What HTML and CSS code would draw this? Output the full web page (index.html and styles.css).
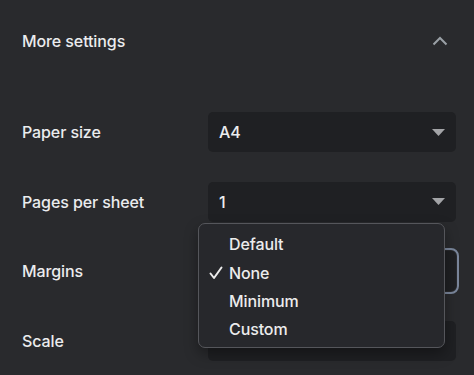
FILE: index.html
```html
<!DOCTYPE html>
<html>
<head>
<meta charset="utf-8">
<link rel="stylesheet" href="styles.css">
</head>
<body>
<div class="panel">
  <div class="header">
    <span class="title">More settings</span>
    <svg class="chevron" width="16" height="10" viewBox="0 0 16 10"><polyline points="1.5,8.5 8,2 14.5,8.5" fill="none" stroke="#9aa0a6" stroke-width="2"/></svg>
  </div>
  <div class="settings">
    <div class="label">Paper size</div>
    <div class="select"><span>A4</span><svg class="arrow" width="13" height="7" viewBox="0 0 13 7"><polygon points="0,0 13,0 6.5,7" fill="#a3a4a7"/></svg></div>
    <div class="label">Pages per sheet</div>
    <div class="select"><span>1</span><svg class="arrow" width="13" height="7" viewBox="0 0 13 7"><polygon points="0,0 13,0 6.5,7" fill="#a3a4a7"/></svg></div>
    <div class="label">Margins</div>
    <div class="select focused"></div>
    <div class="label">Scale</div>
    <div class="select"></div>
  </div>
  <div class="menu">
    <div class="item"><span class="check"></span>Default</div>
    <div class="item"><span class="check"><svg width="14" height="14" viewBox="0 0 14 14"><polyline points="1.5,7.5 5,12 12.5,1.5" fill="none" stroke="#ececec" stroke-width="2" stroke-linecap="round" stroke-linejoin="round"/></svg></span>None</div>
    <div class="item"><span class="check"></span>Minimum</div>
    <div class="item"><span class="check"></span>Custom</div>
  </div>
</div>
</body>
</html>
```

FILE: styles.css
```css
html, body {
  margin: 0;
  padding: 0;
  background: #292a2d;
  width: 474px;
  height: 375px;
  overflow: hidden;
}
.panel {
  position: relative;
  padding: 0 18px 0 22px;
  font-family: Inter, Roboto, "Liberation Sans", sans-serif;
  font-weight: 500;
  color: #ebecee;
  font-size: 16px;
  letter-spacing: -0.1px;
}
.header {
  height: 82px;
  display: flex;
  align-items: center;
  justify-content: space-between;
}
.chevron {
  margin-right: 8px;
}
.settings {
  margin-top: 30px;
  display: grid;
  grid-template-columns: 186px 1fr;
  grid-auto-rows: 40px;
  row-gap: 29.5px;
  align-items: center;
}
.label {
  font-size: 16px;
}
.select {
  height: 40px;
  background: #1f2023;
  border-radius: 5px;
  display: flex;
  align-items: center;
  justify-content: space-between;
  padding: 0 11px;
  box-sizing: border-box;
}
.select.focused {
  outline: 2px solid #7a869b;
  outline-offset: 1px;
}
.menu {
  position: absolute;
  left: 198px;
  top: 223px;
  width: 247px;
  height: 125px;
  box-sizing: border-box;
  background: #27282c;
  border: 1px solid #55565b;
  border-radius: 7px;
  box-shadow: 0 6px 14px rgba(0,0,0,0.35);
  padding-top: 6px;
  font-family: Inter, "Noto Sans", sans-serif;
  color: #ececec;
}
.item {
  height: 28.4px;
  display: flex;
  align-items: center;
  font-size: 16px;
}
.check {
  width: 30px;
  padding-left: 10px;
  box-sizing: border-box;
  display: flex;
  align-items: center;
}
```
